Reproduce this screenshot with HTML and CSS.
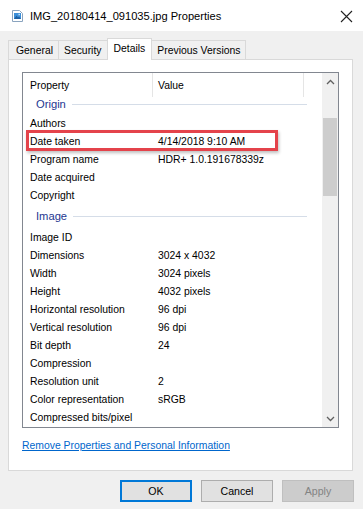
FILE: index.html
```html
<!DOCTYPE html>
<html>
<head>
<meta charset="utf-8">
<link rel="stylesheet" href="styles.css">
</head>
<body>
<div class="window">
  <div class="titlebar">
    <svg class="ticon" width="11" height="12" viewBox="0 0 11 12">
      <path d="M0.5 0.5 H7.5 L10.5 3.5 V11.5 H0.5 Z" fill="#fff" stroke="#8aa4bf"/>
      <rect x="2" y="3" width="7" height="6" fill="#3d8fd8"/>
      <path d="M2 9 L4.5 5.5 L6 7.5 L7 6.5 L9 9 Z" fill="#1d5fa3"/>
      <rect x="6.5" y="3.8" width="1.4" height="1.4" fill="#cfe6fb"/>
    </svg>
    <span class="title">IMG_20180414_091035.jpg Properties</span>
    <svg class="close" width="13" height="13" viewBox="0 0 13 13">
      <path d="M1 1 L12 12 M12 1 L1 12" stroke="#222" stroke-width="1.1"/>
    </svg>
  </div>

  <div class="tabs">
    <div class="tab">General</div>
    <div class="tab">Security</div>
    <div class="tab active">Details</div>
    <div class="tab">Previous Versions</div>
  </div>

  <div class="panel">
    <div class="listbox">
      <div class="list">
        <div class="header">
          <div class="hcell c1">Property</div>
          <div class="hcell c2">Value</div>
          <div class="hcell c3"></div>
        </div>
        <div class="group first"><span>Origin</span><i></i></div>
        <div class="row"><span class="k">Authors</span><span class="v"></span></div>
        <div class="row hl"><span class="k">Date taken</span><span class="v">4/14/2018 9:10 AM</span><div class="mark"></div></div>
        <div class="row"><span class="k">Program name</span><span class="v">HDR+ 1.0.191678339z</span></div>
        <div class="row"><span class="k">Date acquired</span><span class="v"></span></div>
        <div class="row"><span class="k">Copyright</span><span class="v"></span></div>
        <div class="group"><span>Image</span><i></i></div>
        <div class="row"><span class="k">Image ID</span><span class="v"></span></div>
        <div class="row"><span class="k">Dimensions</span><span class="v">3024 x 4032</span></div>
        <div class="row"><span class="k">Width</span><span class="v">3024 pixels</span></div>
        <div class="row"><span class="k">Height</span><span class="v">4032 pixels</span></div>
        <div class="row"><span class="k">Horizontal resolution</span><span class="v">96 dpi</span></div>
        <div class="row"><span class="k">Vertical resolution</span><span class="v">96 dpi</span></div>
        <div class="row"><span class="k">Bit depth</span><span class="v">24</span></div>
        <div class="row"><span class="k">Compression</span><span class="v"></span></div>
        <div class="row"><span class="k">Resolution unit</span><span class="v">2</span></div>
        <div class="row"><span class="k">Color representation</span><span class="v">sRGB</span></div>
        <div class="row"><span class="k">Compressed bits/pixel</span><span class="v"></span></div>
      </div>
      <div class="scrollbar">
        <div class="arrow">
          <svg width="9" height="6" viewBox="0 0 9 6"><path d="M1 5 L4.5 1.5 L8 5" fill="none" stroke="#606060" stroke-width="1.3"/></svg>
        </div>
        <div class="track">
          <div class="thumb"></div>
        </div>
        <div class="arrow">
          <svg width="9" height="6" viewBox="0 0 9 6"><path d="M1 1 L4.5 4.5 L8 1" fill="none" stroke="#606060" stroke-width="1.3"/></svg>
        </div>
      </div>
    </div>
    <a class="link" href="#">Remove Properties and Personal Information</a>
  </div>

  <div class="buttons">
    <div class="btn default">OK</div>
    <div class="btn">Cancel</div>
    <div class="btn disabled">Apply</div>
  </div>
</div>
</body>
</html>
```

FILE: styles.css
```css
* { box-sizing: border-box; }
html, body { margin: 0; padding: 0; }
body {
  width: 363px;
  height: 509px;
  overflow: hidden;
  background: #f0f0f0;
  font-family: "Liberation Sans", Arial, sans-serif;
  font-size: 10.4px;
  color: #000;
}
.window { width: 363px; height: 509px; display: flex; flex-direction: column; }

.titlebar {
  height: 31px;
  background: #fff;
  display: flex;
  align-items: center;
  padding-left: 12px;
  padding-right: 10px;
}
.ticon { margin-top: 1px; }
.title { font-size: 11.1px; margin-left: 7px; color: #000; flex: 1; }
.close { margin-top: 1px; }

.tabs {
  display: flex;
  align-items: flex-end;
  padding-left: 8px;
  margin-top: 7px;
  height: 21px;
  position: relative;
  z-index: 2;
}
.tab {
  height: 19px;
  padding: 0 5px;
  border: 1px solid #d9d9d9;
  border-bottom: none;
  margin-left: -1px;
  background: #f0f0f0;
  display: flex;
  align-items: center;
  padding-top: 1px;
}
.tab:first-child { margin-left: 0; padding-left: 7px; }
.tab.active {
  height: 22px;
  background: #fff;
  margin-bottom: -1px;
  padding: 0 6px 3px;
  position: relative;
}

.panel {
  margin: 0 10px 0 8px;
  height: 412px;
  background: #fff;
  border: 1px solid #d9d9d9;
  padding: 12px 13px 0 13px;
  display: flex;
  flex-direction: column;
}

.listbox {
  width: 317px;
  height: 356px;
  border: 1px solid #828790;
  display: flex;
  overflow: hidden;
}
.list { flex: 1; display: flex; flex-direction: column; }

.header { height: 24px; display: flex; }
.hcell {
  height: 24px;
  display: flex;
  align-items: center;
  border-right: 1px solid #e5e5e5;
}
.hcell.c1 { width: 130px; padding-left: 7px; }
.hcell.c2 { width: 151px; padding-left: 5px; }
.hcell.c3 { flex: 1; border-right: none; }

.group {
  display: flex;
  align-items: center;
  padding-left: 13px;
  color: #1e3791;
  font-size: 11.2px;
  height: 24px;
  padding-bottom: 1px;
}
.group.first { height: 17px; padding-bottom: 3px; }
.group i {
  flex: 1;
  height: 1px;
  background: #d5dde8;
  margin: 1px 4px 0 6px;
  margin-right: 15px;
}

.row { height: 18px; display: flex; align-items: center; position: relative; }
.row .k { width: 135px; padding-left: 7px; white-space: nowrap; }
.row .v { white-space: nowrap; }

.mark {
  position: absolute;
  left: 3px;
  top: -2px;
  width: 252px;
  height: 21px;
  border: 3px solid #e4434b;
  box-shadow: 1px 2px 3px rgba(0,0,0,0.25);
}

.scrollbar {
  width: 16px;
  background: #f0f0f0;
  display: flex;
  flex-direction: column;
}
.arrow { height: 17px; display: flex; align-items: center; justify-content: center; }
.track { flex: 1; padding-top: 28px; }
.thumb { height: 78px; background: #cdcdcd; margin: 0 1px; }

.link {
  margin-top: 12px;
  color: #0066cc;
  text-decoration: underline;
  align-self: flex-start;
}

.buttons {
  display: flex;
  justify-content: flex-end;
  gap: 9px;
  padding-right: 9px;
  margin-top: 9px;
}
.btn {
  width: 72px;
  height: 22px;
  background: #e1e1e1;
  border: 1px solid #adadad;
  display: flex;
  align-items: center;
  justify-content: center;
  font-size: 10.6px;
}
.btn.default { border: 2px solid #0078d7; }
.btn.disabled { background: #cccccc; border-color: #bfbfbf; color: #838383; }
```
